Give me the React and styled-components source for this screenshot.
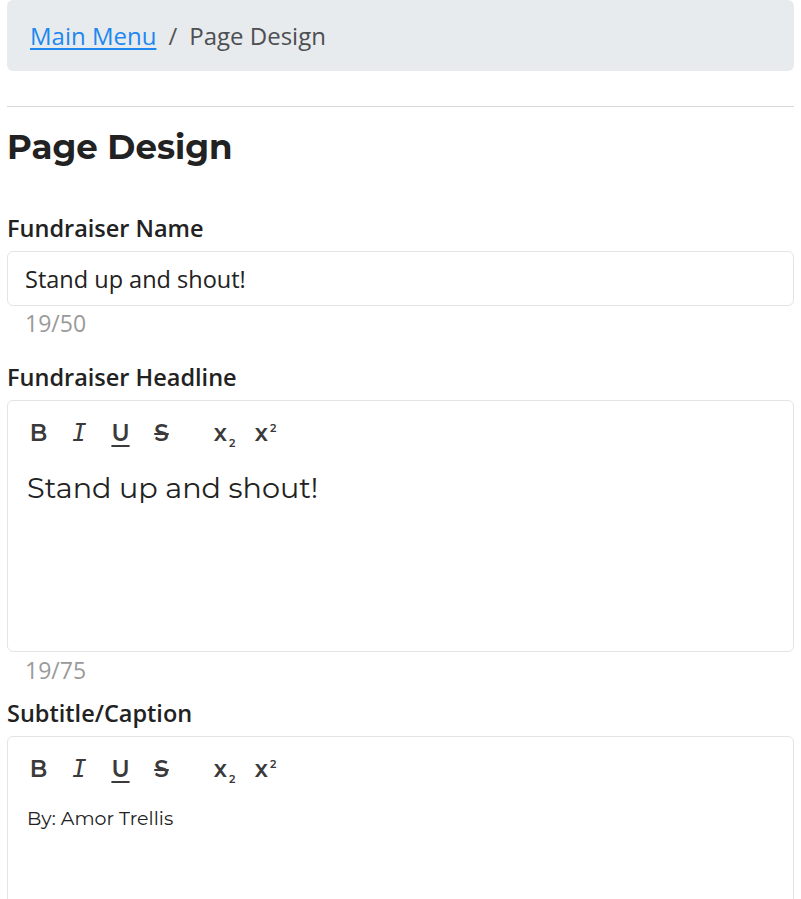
import React from "react";
import styled, { createGlobalStyle } from "styled-components";

const Global = createGlobalStyle`
  body {
    margin: 0;
    background: #ffffff;
    font-family: "Open Sans", "Liberation Sans", sans-serif;
    color: #222;
  }
`;

const Page = styled.div`
  padding: 0 7px;
`;

const Breadcrumb = styled.nav`
  display: flex;
  align-items: center;
  gap: 12px;
  height: 71px;
  padding: 0 23px;
  background: #e8ebee;
  border-radius: 6px;
  font-size: 24px;
  font-weight: 500;
  box-sizing: border-box;
`;

const Crumb = styled.a`
  color: #1e88f0;
  text-decoration: underline;
  text-decoration-thickness: 2px;
  text-underline-offset: 3px;
`;

const Sep = styled.span`
  color: #555;
`;

const Current = styled.span`
  color: #4d4f52;
`;

const Rule = styled.hr`
  border: 0;
  border-top: 1px solid #d9d9d9;
  margin: 35px 0 0;
`;

const Title = styled.h1`
  font-family: "Montserrat", "DejaVu Sans", sans-serif;
  font-weight: 700;
  font-size: 34px;
  line-height: 41px;
  margin: 20px 0 44px;
  color: #222;
`;

const Field = styled.div`
  display: flex;
  flex-direction: column;
`;

const Label = styled.label`
  font-size: 23.5px;
  line-height: 32px;
  font-weight: 600;
  color: #222;
  margin-bottom: 7px;
`;

const Input = styled.div`
  height: 55px;
  box-sizing: border-box;
  border: 1px solid #e4e4e4;
  border-radius: 6px;
  display: flex;
  align-items: center;
  padding: 0 17px;
  font-size: 23.5px;
  color: #222;
`;

const Counter = styled.div`
  font-size: 23px;
  line-height: 31px;
  color: #9a9a9a;
  padding: ${(p) => p.$top}px 18px 0;
  margin-bottom: ${(p) => p.$bottom}px;
`;

const Editor = styled.div`
  border: 1px solid #e4e4e4;
  border-radius: 6px;
  height: ${(p) => p.$height}px;
  box-sizing: border-box;
  padding-top: 16px;
`;

const Toolbar = styled.div`
  display: flex;
  align-items: center;
  height: 32px;
  padding-left: 10px;
  font-family: "Montserrat", "DejaVu Sans", sans-serif;
  color: #3a3a3a;
`;

const Tool = styled.span`
  display: inline-block;
  text-align: center;
  width: 41px;
  line-height: 32px;
  font-size: 23px;
  font-weight: 600;
  text-decoration: ${(p) => p.$deco || "none"};
  text-decoration-thickness: 2px;
  text-underline-offset: 4px;
  margin-right: ${(p) => p.$gap || 0}px;

  sub, sup {
    font-size: 11px;
    font-weight: 600;
    margin-left: 2px;
    line-height: 0;
  }
`;

const ItalicTool = styled(Tool)`
  font-family: "DejaVu Sans Mono", monospace;
  font-style: italic;
  font-weight: 500;
  font-size: 24px;
`;

const Content = styled.div`
  font-family: "Montserrat", "DejaVu Sans", sans-serif;
  font-size: ${(p) => p.$size}px;
  color: #222;
  padding: 0 19px;
  margin-top: ${(p) => p.$top}px;
`;

const Tools = () => (
  <Toolbar>
    <Tool>B</Tool>
    <ItalicTool>I</ItalicTool>
    <Tool $deco="underline">U</Tool>
    <Tool $deco="line-through" $gap={22}>S</Tool>
    <Tool>
      x<sub>2</sub>
    </Tool>
    <Tool>
      x<sup>2</sup>
    </Tool>
  </Toolbar>
);

export default function App() {
  return (
    <Page>
      <Global />
      <Breadcrumb>
        <Crumb href="#">Main Menu</Crumb>
        <Sep>/</Sep>
        <Current>Page Design</Current>
      </Breadcrumb>
      <Rule />
      <Title>Page Design</Title>

      <Field>
        <Label>Fundraiser Name</Label>
        <Input>Stand up and shout!</Input>
        <Counter $top={2} $bottom={22}>19/50</Counter>
      </Field>

      <Field>
        <Label>Fundraiser Headline</Label>
        <Editor $height={252}>
          <Tools />
          <Content $size={28.7} $top={21}>Stand up and shout!</Content>
        </Editor>
        <Counter $top={3} $bottom={11}>19/75</Counter>
      </Field>

      <Field>
        <Label>Subtitle/Caption</Label>
        <Editor $height={250}>
          <Tools />
          <Content $size={19} $top={22}>By: Amor Trellis</Content>
        </Editor>
      </Field>
    </Page>
  );
}
